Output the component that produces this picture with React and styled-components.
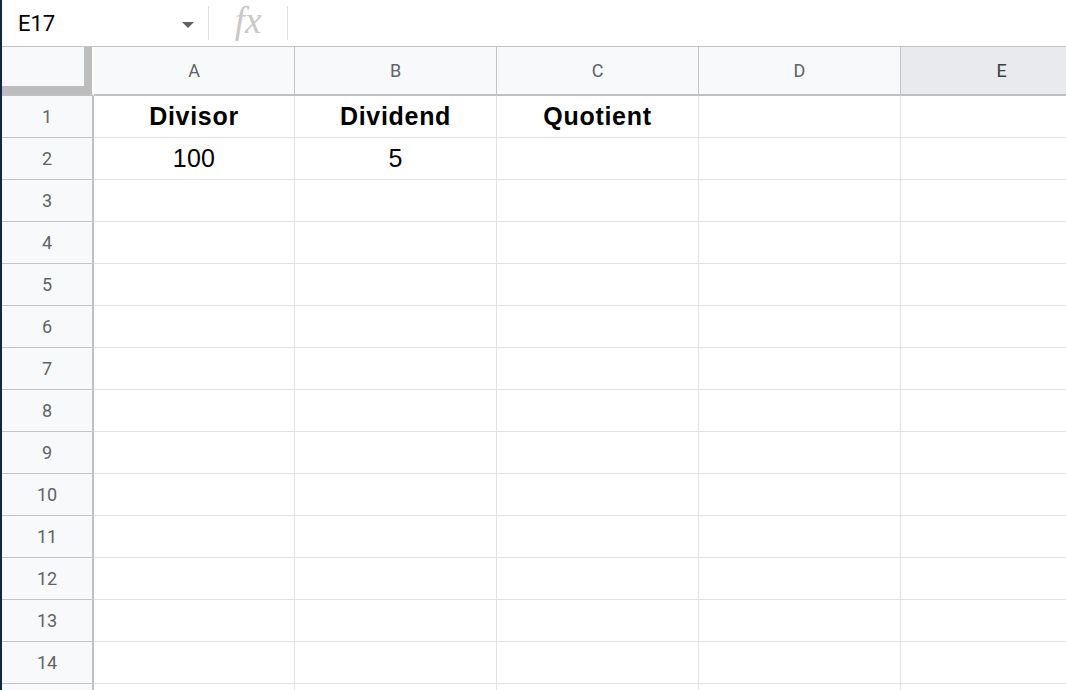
import React from "react";
import styled, { createGlobalStyle } from "styled-components";

const GlobalStyle = createGlobalStyle`
  html, body {
    margin: 0;
    padding: 0;
    background: #ffffff;
  }
  body {
    font-family: Roboto, "Liberation Sans", Arial, sans-serif;
  }
`;

const Window = styled.div`
  display: flex;
  flex-direction: column;
  height: 690px;
  overflow: hidden;
  border-left: 2px solid #10264a;
  background: #ffffff;
`;

const FormulaBar = styled.div`
  display: flex;
  align-items: center;
  height: 46px;
  flex-shrink: 0;
  border-bottom: 1px solid #c4c4c4;
`;

const NameBox = styled.div`
  display: flex;
  align-items: center;
  justify-content: space-between;
  width: 176px;
  padding: 0 14px 0 16px;
  font-size: 22px;
  color: #000;
`;

const Caret = styled.span`
  width: 0;
  height: 0;
  border-left: 6px solid transparent;
  border-right: 6px solid transparent;
  border-top: 6px solid #5f6368;
  margin-top: 3px;
`;

const Divider = styled.span`
  width: 1px;
  height: 34px;
  background: #e0e0e0;
`;

const Fx = styled.span`
  width: 78px;
  text-align: center;
  font-family: "Liberation Serif", "DejaVu Serif", serif;
  font-style: italic;
  font-size: 37px;
  color: #c8c8c8;
  line-height: 1;
  margin-top: -6px;
`;

const Grid = styled.div`
  display: grid;
  grid-template-columns: 92px 201px 202px 202px 202px 202px;
  overflow: hidden;
`;

const Corner = styled.div`
  height: 49px;
  box-sizing: border-box;
  background: #f8f9fa;
  border-right: 2px solid #ffffff;
  border-bottom: 2px solid #c0c0c0;
  box-shadow: inset -8px -8px 0 #bdbdbd;
`;

const ColHeader = styled.div`
  height: 49px;
  box-sizing: border-box;
  display: flex;
  align-items: center;
  justify-content: center;
  font-size: 18px;
  color: ${(p) => (p.$active ? "#3c4043" : "#5f6368")};
  background: ${(p) => (p.$active ? "#e8eaed" : "#f8f9fa")};
  border-right: 1px solid #c4c4c4;
  border-bottom: 2px solid #c0c0c0;
`;

const RowHeader = styled.div`
  height: 42px;
  box-sizing: border-box;
  display: flex;
  align-items: center;
  justify-content: center;
  font-size: 18px;
  color: #5f6368;
  background: #f8f9fa;
  border-right: 2px solid #c0c0c0;
  border-bottom: 1px solid #c4c4c4;
`;

const Cell = styled.div`
  height: 42px;
  box-sizing: border-box;
  display: flex;
  align-items: center;
  justify-content: center;
  font-family: "Liberation Sans", Arial, sans-serif;
  font-size: 25px;
  font-weight: ${(p) => (p.$bold ? 700 : 400)};
  letter-spacing: ${(p) => (p.$bold ? "0.7px" : "0.3px")};
  color: #000;
  border-right: 1px solid #e2e2e2;
  border-bottom: 1px solid #e2e2e2;
`;

const columns = ["A", "B", "C", "D", "E"];

const data = {
  1: [
    { text: "Divisor", bold: true },
    { text: "Dividend", bold: true },
    { text: "Quotient", bold: true },
  ],
  2: [{ text: "100" }, { text: "5" }],
};

export default function App() {
  // 14 numbered rows are visible, plus the top edge of the next one
  const rows = Array.from({ length: 15 }, (_, i) => i + 1);

  return (
    <Window>
      <GlobalStyle />
      <FormulaBar>
        <NameBox>
          E17
          <Caret />
        </NameBox>
        <Divider />
        <Fx>fx</Fx>
        <Divider />
      </FormulaBar>
      <Grid>
        <Corner />
        {columns.map((c) => (
          <ColHeader key={c} $active={c === "E"}>
            {c}
          </ColHeader>
        ))}
        {rows.map((r) => (
          <React.Fragment key={r}>
            <RowHeader>{r <= 14 ? r : ""}</RowHeader>
            {columns.map((c, ci) => {
              const cell = (data[r] || [])[ci];
              return (
                <Cell key={c} $bold={cell && cell.bold}>
                  {cell ? cell.text : ""}
                </Cell>
              );
            })}
          </React.Fragment>
        ))}
      </Grid>
    </Window>
  );
}
